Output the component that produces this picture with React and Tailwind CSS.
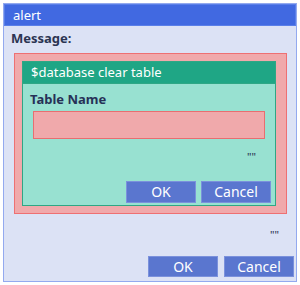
import React from 'react';

function Btn({ children, h = 'h-[21px]' }) {
  return (
    <button className={`w-[70px] ${h} bg-[#5a76cf] border border-[#7b91dc] text-white text-[14px] leading-none flex items-center justify-center`}>
      {children}
    </button>
  );
}

export default function App() {
  return (
    <div className="w-[300px] h-[285px] bg-white pt-[3px] pl-[3px] font-['Noto_Sans','Liberation_Sans',sans-serif]">
      <div className="w-[294px] h-[279px] border border-[#93a9ef] bg-[#dce2f5] flex flex-col">
        <div className="h-[22px] bg-[#4169e1] border border-[#5a7fe8] text-white text-[13px] leading-none flex items-center pl-[8px]">
          alert
        </div>
        <div className="pl-[7px] pt-[6px] h-[20px] text-[13px] font-bold leading-none text-[#2b3452]">Message:</div>
        <div className="ml-[10px] mt-[7px] w-[273px] h-[161px] bg-[#f0a9ab] border border-[#ee7073] pl-[7px] pt-[7px]">
          <div className="w-[254px] h-[145px] bg-[#98e1d1] border border-[#2ea785] flex flex-col">
            <div className="h-[22px] bg-[#1fa685] border-b border-[#2ea785] text-white text-[13px] leading-none flex items-center pl-[8px]">
              $database clear table
            </div>
            <div className="pl-[7px] pt-[9px] h-[22px] text-[13px] font-bold leading-none text-[#263157]">Table Name</div>
            <div className="ml-[10px] mt-[5px] w-[232px] h-[28px] bg-[#f0a9ab] border border-[#e96e70]" />
            <div className="h-[14px] mt-[12px] flex justify-end pr-[19px] text-[11px] leading-none text-[#26304f]">""</div>
            <div className="mt-[16px] flex justify-end gap-[5px] pr-[4px]">
              <Btn h="h-[22px]">OK</Btn>
              <Btn h="h-[22px]">Cancel</Btn>
            </div>
          </div>
        </div>
        <div className="mt-[15px] h-[12px] flex justify-end pr-[17px] text-[11px] leading-none text-[#26304f]">""</div>
        <div className="mt-[15px] flex justify-end gap-[6px] pr-[2px]">
          <Btn>OK</Btn>
          <Btn>Cancel</Btn>
        </div>
      </div>
    </div>
  );
}
